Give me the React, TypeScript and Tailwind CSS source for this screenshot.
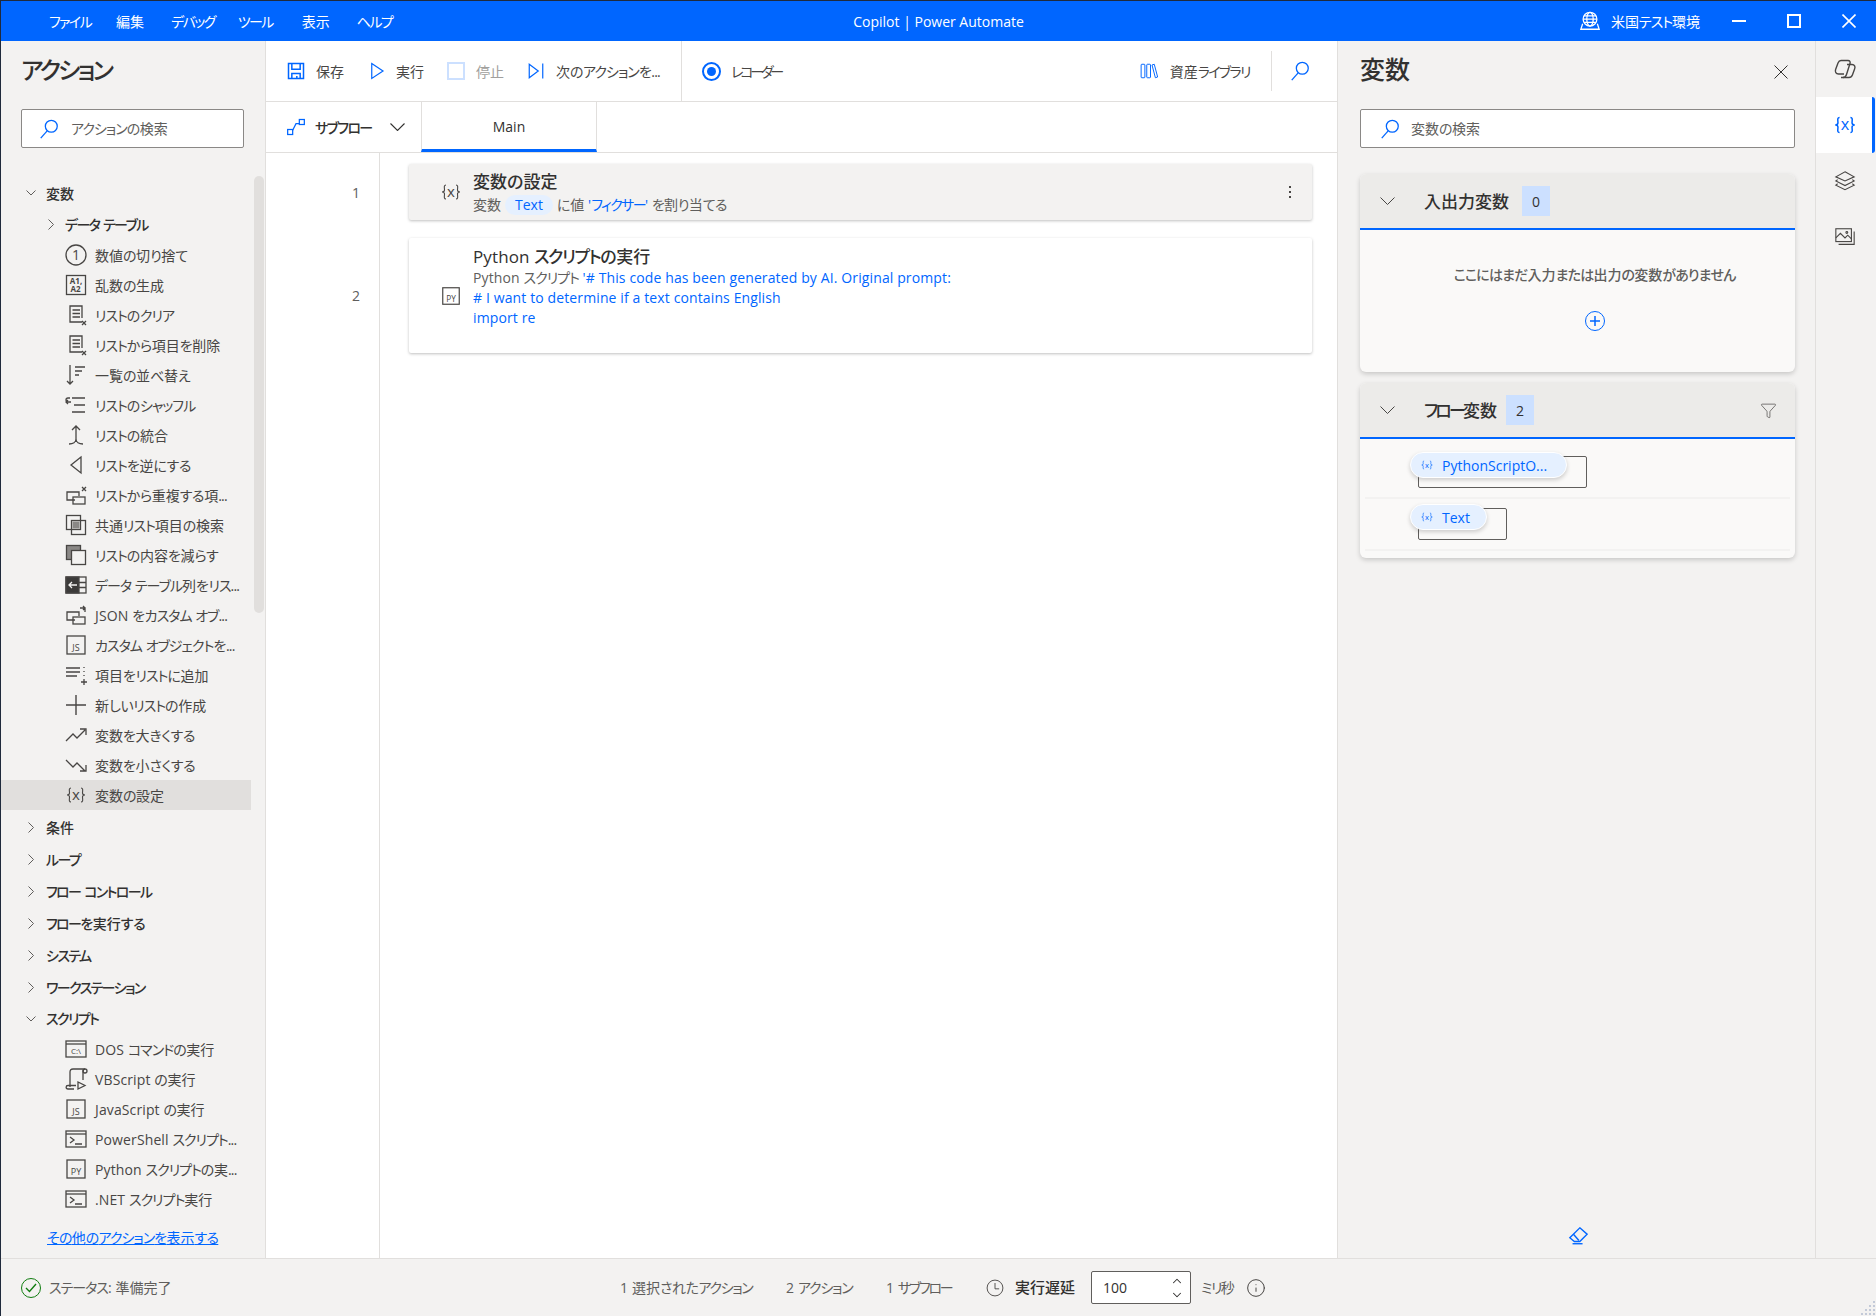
import React from 'react';
import { ChevronDown, ChevronUp, Filter, Info } from 'lucide-react';

const BLUE = '#0066ff';

// the reference font has much narrower kana than Noto, so tighten per script
const TIGHT = 'tracking-[-1.6px]';

const T: React.FC<{ children: string; k?: string; h?: string }> = ({ children, k = 'tracking-[-1px]', h = 'tracking-[-0.4px]' }) => {
  const runs = children.match(/\.\.\.|[ァ-ヶー・]+|[ぁ-ん]+|[\x20-\x2d\x2f-\x7e]+|\.|[^ァ-ヶー・ぁ-ん\x20-\x7e]+/g) ?? [];
  return (
    <span>
      {runs.map((run, i) => {
        if (run === '...') return <span key={i} className="tracking-[-0.8px]">{run}</span>;
        if (/^[ァ-ヶー・]/.test(run)) return <span key={i} className={k}>{run}</span>;
        if (/^[ぁ-ん]/.test(run)) return <span key={i} className={h}>{run}</span>;
        if (/^[\x20-\x7e]/.test(run)) return <span key={i} className="tracking-[0.12px]">{run}</span>;
        return <span key={i}>{run}</span>;
      })}
    </span>
  );
};

const Ic: React.FC<{ size?: number; color?: string; sw?: number; vb?: string; children: React.ReactNode }> = ({
  size = 24,
  color = '#484644',
  sw = 1.2,
  vb = '0 0 24 24',
  children,
}) => (
  <svg width={size} height={size} viewBox={vb} fill="none" stroke={color} strokeWidth={sw} className="shrink-0">
    {children}
  </svg>
);

const Chev: React.FC<{ dir: 'down' | 'right'; w: number; color?: string; sw?: number }> = ({ dir, w, color = '#605e5c', sw = 1 }) => {
  const h = w / 2 + 1;
  return dir === 'down' ? (
    <svg width={w} height={h} viewBox={`0 0 ${w} ${h}`} fill="none" stroke={color} strokeWidth={sw} className="shrink-0">
      <path d={`M0.500 0.500 L${w / 2} ${w / 2} L${w - 0.5} 0.500`} />
    </svg>
  ) : (
    <svg width={h} height={w} viewBox={`0 0 ${h} ${w}`} fill="none" stroke={color} strokeWidth={sw} className="shrink-0">
      <path d={`M0.500 0.500 L${w / 2} ${w / 2} L0.500 ${w - 0.5}`} />
    </svg>
  );
};

const Cross: React.FC<{ w: number; color?: string; sw?: number }> = ({ w, color = 'currentColor', sw = 1 }) => (
  <svg width={w} height={w} viewBox={`0 0 ${w} ${w}`} fill="none" stroke={color} strokeWidth={sw} className="shrink-0">
    <path d={`M0.500 0.500 L${w - 0.5} ${w - 0.5} M${w - 0.5} 0.500 L0.500 ${w - 0.5}`} />
  </svg>
);

const SvgLabel: React.FC<{ x: number; y: number; size: number; children: string; color?: string; weight?: number }> = ({ x, y, size, children, color = '#484644', weight = 400 }) => (
  <text x={x} y={y} fontSize={size} fontWeight={weight} fill={color} stroke="none" textAnchor="middle" fontFamily="'Open Sans', sans-serif">
    {children}
  </text>
);

const SearchIcon: React.FC<{ size?: number }> = ({ size = 22 }) => (
  <Ic size={size} color={BLUE} sw={1.4}>
    <circle cx="14.5" cy="9" r="6.5" />
    <path d="M10 14 L3 22" />
  </Ic>
);

const BracesX: React.FC<{ size?: number; color?: string; fs?: number; sw?: number }> = ({ size = 24, color = '#484644', fs = 15, sw = 1.1 }) => (
  <Ic size={size} color={color} sw={sw}>
    <path d="M7 5 C4.500 5 5.500 8 5.500 10 C5.500 11.500 4.500 12 3 12 C4.500 12 5.500 12.500 5.500 14 C5.500 16 4.500 19 7 19" />
    <path d="M17 5 C19.500 5 18.500 8 18.500 10 C18.500 11.500 19.500 12 21 12 C19.500 12 18.500 12.500 18.500 14 C18.500 16 19.500 19 17 19" />
    <SvgLabel x={12} y={17} size={fs} color={color}>x</SvgLabel>
  </Ic>
);

const PyIcon: React.FC<{ size?: number }> = ({ size = 24 }) => (
  <Ic size={size} sw={1.3}>
    <rect x="3" y="3" width="18" height="18" />
    <SvgLabel x={12} y={18} size={9}>PY</SvgLabel>
  </Ic>
);

const JsIcon = () => (
  <Ic sw={1.3}>
    <rect x="3" y="3" width="18" height="18" />
    <SvgLabel x={12} y={18} size={9}>JS</SvgLabel>
  </Ic>
);

const ListX = () => (
  <Ic sw={1.3}>
    <path d="M18 19 H6 V3 H18 V15" />
    <path d="M8.500 7 H16 M8.500 10.500 H16 M8.500 14 H16" />
    <path d="M18 18 L22 22 M22 18 L18 22" />
  </Ic>
);

const Terminal = () => (
  <Ic sw={1.3}>
    <rect x="2" y="4" width="20" height="16" />
    <path d="M2 7 H22" />
    <path d="M6 10 L10 13 L6 16 M11 17 H18" />
  </Ic>
);

const TwoBoxes: React.FC<{ mark: 'x' | 'arrow' }> = ({ mark }) => (
  <Ic sw={1.3}>
    <path d="M11 17 H3 V9 H15 V13" />
    <rect x="9" y="14" width="12" height="7" />
    {mark === 'x' ? <path d="M18 4 L22 8 M22 4 L18 8" /> : <path d="M16 5 H21 V9 M19 3 L21 5 L19 7" />}
  </Ic>
);

const treeIcons: Record<string, React.ReactNode> = {
  round: (
    <Ic sw={1.3}>
      <circle cx="12" cy="12" r="10" />
      <SvgLabel x={12} y={17} size={14}>1</SvgLabel>
    </Ic>
  ),
  random: (
    <Ic sw={1.3}>
      <rect x="2.500" y="2.500" width="19" height="19" />
      <SvgLabel x={12} y={11} size={8} weight={700}>A1,</SvgLabel>
      <SvgLabel x={11.5} y={19} size={8} weight={700}>A2</SvgLabel>
    </Ic>
  ),
  clear: <ListX />,
  remove: <ListX />,
  sort: (
    <Ic sw={1.3}>
      <path d="M6 2 V21 M3 18 L6 21 L9 18" />
      <path d="M11 4 H21 M11 8 H18 M11 12 H15" />
    </Ic>
  ),
  shuffle: (
    <Ic sw={1.3}>
      <path d="M8 5 H21 M10 12 H21 M8 19 H21" />
      <path d="M7 9 H4 A2 2 0 0 1 4 5 H6 M4 7 L2 9 L4 11" />
    </Ic>
  ),
  merge: (
    <Ic sw={1.3}>
      <path d="M12 3 V16 M8 7 L12 3 L16 7" />
      <path d="M12 16 C12 19 9 21 5 21 M12 16 C12 19 15 21 19 21" />
    </Ic>
  ),
  reverse: (
    <Ic sw={1.3}>
      <path d="M17 4 L7 12 L17 20 Z" />
    </Ic>
  ),
  dedupe: <TwoBoxes mark="x" />,
  common: (
    <Ic sw={1.3}>
      <rect x="2.500" y="2.500" width="14" height="14" />
      <rect x="7.500" y="7.500" width="14" height="14" />
      <rect x="8.500" y="8.500" width="7" height="7" fill="#8a8886" stroke="none" />
    </Ic>
  ),
  subtract: (
    <Ic sw={1.3}>
      <rect x="2.500" y="2.500" width="14" height="14" fill="#8a8886" />
      <rect x="7.500" y="7.500" width="14" height="14" fill="#f3f2f1" />
    </Ic>
  ),
  table: (
    <Ic sw={1.3}>
      <rect x="2" y="4" width="20" height="16" />
      <rect x="2" y="4" width="13" height="16" fill="#3b3a39" />
      <path d="M15 9.500 H22 M15 14.500 H22" />
      <path d="M13 12 H5 M8 9 L5 12 L8 15" stroke="#f3f2f1" />
    </Ic>
  ),
  json: <TwoBoxes mark="arrow" />,
  customjs: <JsIcon />,
  append: (
    <Ic sw={1.3}>
      <path d="M2 5 H16 M2 9 H16 M2 13 H13" />
      <path d="M20 4 V5 M20 8 V9 M20 12 V13" />
      <path d="M17 19 H23 M20 16 V22" />
    </Ic>
  ),
  plus: (
    <Ic sw={1.4}>
      <path d="M2 12 H22 M12 2 V22" />
    </Ic>
  ),
  up: (
    <Ic sw={1.3}>
      <path d="M2 18 L9 11 L13 15 L21 7 M16 6 H22 V12" />
    </Ic>
  ),
  down: (
    <Ic sw={1.3}>
      <path d="M2 7 L9 14 L13 10 L21 18 M22 12 V18 H16" />
    </Ic>
  ),
  setvar: <BracesX />,
  dos: (
    <Ic sw={1.3}>
      <rect x="2" y="4" width="20" height="16" />
      <path d="M2 7 H22" />
      <SvgLabel x={12} y={17} size={8}>{'C:\\'}</SvgLabel>
    </Ic>
  ),
  vbs: (
    <Ic sw={1.3}>
      <path d="M6 20 V5 C6 3 7 2 9 2 H21 C19.500 2 19 3 19 5 V13" />
      <path d="M10 22 H4 C1.500 22 1.500 18.500 4 18.500 H12" />
      <path d="M14 15 V22 L21 18.500 Z" />
      <circle cx="21" cy="4" r="2" />
    </Ic>
  ),
  js: <JsIcon />,
  ps: <Terminal />,
  py: <PyIcon />,
  net: <Terminal />,
};

const variableItems: [string, string][] = [
  ['round', '数値の切り捨て'],
  ['random', '乱数の生成'],
  ['clear', 'リストのクリア'],
  ['remove', 'リストから項目を削除'],
  ['sort', '一覧の並べ替え'],
  ['shuffle', 'リストのシャッフル'],
  ['merge', 'リストの統合'],
  ['reverse', 'リストを逆にする'],
  ['dedupe', 'リストから重複する項...'],
  ['common', '共通リスト項目の検索'],
  ['subtract', 'リストの内容を減らす'],
  ['table', 'データ テーブル列をリス...'],
  ['json', 'JSON をカスタム オブ...'],
  ['customjs', 'カスタム オブジェクトを...'],
  ['append', '項目をリストに追加'],
  ['plus', '新しいリストの作成'],
  ['up', '変数を大きくする'],
  ['down', '変数を小さくする'],
  ['setvar', '変数の設定'],
];

const scriptItems: [string, string][] = [
  ['dos', 'DOS コマンドの実行'],
  ['vbs', 'VBScript の実行'],
  ['js', 'JavaScript の実行'],
  ['ps', 'PowerShell スクリプト...'],
  ['py', 'Python スクリプトの実...'],
  ['net', '.NET スクリプト実行'],
];

const TreeItem: React.FC<{ icon: string; label: string; selected?: boolean }> = ({ icon, label, selected }) => (
  <div className={`flex h-[30px] items-center pl-[63px] text-[14px] whitespace-nowrap text-[#484644] ${selected ? 'bg-[#e1dfdd]' : ''}`}>
    <span className="flex w-[31px] shrink-0">{treeIcons[icon]}</span>
    <T>{label}</T>
  </div>
);

const Category: React.FC<{ label: string; open?: boolean; h?: string }> = ({ label, open, h = 'h-[32px]' }) => (
  <div className={`flex ${h} items-center pl-[22px] text-[14px] font-medium text-[#323130]`}>
    <span className={`flex w-[23px] shrink-0 ${open ? 'pl-[3px]' : 'pl-[5px]'}`}>
      {open ? <Chev dir="down" w={10} /> : <Chev dir="right" w={11} />}
    </span>
    <T k={TIGHT}>{label}</T>
  </div>
);

const ActionsPanel = () => (
  <aside className="flex w-[265px] shrink-0 flex-col border-r border-[#e1dfdd] bg-[#f3f2f1]">
    <div className="flex h-[58px] shrink-0 items-center pl-[20px] text-[24px] font-medium text-[#323130]">
      <T k="tracking-[-2.8px]">アクション</T>
    </div>
    <div className="mt-[10px] ml-[20px] flex h-[39px] w-[223px] shrink-0 items-center rounded-[2px] border border-[#8a8886] bg-white pl-[16px] text-[14px] text-[#605e5c]">
      <span className="flex w-[33px]">
        <SearchIcon />
      </span>
      <T>アクションの検索</T>
    </div>
    <div className="flex min-h-0 flex-1">
      <div className="mt-[29px] w-[250px] shrink-0">
        <Category label="変数" open />
        <div className="flex h-[31px] items-center pl-[41px] text-[14px] font-medium text-[#323130]">
          <span className="flex w-[23px] shrink-0 pl-[6px]">
            <Chev dir="right" w={11} />
          </span>
          <T k={TIGHT}>データ テーブル</T>
        </div>
        {variableItems.map(([icon, label]) => (
          <TreeItem key={label} icon={icon} label={label} selected={icon === 'setvar'} />
        ))}
        <div className="mt-[1px]">
          {['条件', 'ループ', 'フロー コントロール', 'フローを実行する', 'システム', 'ワークステーション'].map((c) => (
            <Category key={c} label={c} />
          ))}
          <Category label="スクリプト" open h="h-[31px]" />
        </div>
        {scriptItems.map(([icon, label]) => (
          <TreeItem key={label} icon={icon} label={label} />
        ))}
        <div className="mt-[14px] pl-[46px] text-[14px] leading-[20px] text-[#0066ff] underline">
          <T h="tracking-[-0.7px]">その他のアクションを表示する</T>
        </div>
      </div>
      <div className="mt-[28px] ml-[3px] h-[437px] w-[10px] rounded-full bg-[#e1dfdd]" />
    </div>
  </aside>
);

const ToolBtn: React.FC<{ icon: React.ReactNode; label: string; disabled?: boolean; w: string }> = ({ icon, label, disabled, w }) => (
  <div className={`flex items-center text-[14px] whitespace-nowrap ${w} ${disabled ? 'text-[#a19f9d]' : 'text-[#484644]'}`}>
    {icon}
    <T>{label}</T>
  </div>
);

const Toolbar = () => (
  <div className="flex h-[61px] shrink-0 items-center border-b border-[#e1dfdd]">
    <div className="flex h-full w-[416px] shrink-0 items-center border-r border-[#e1dfdd] pl-[20px]">
      <ToolBtn
        w="w-[82px]"
        label="保存"
        icon={
          <span className="mr-[10px] flex">
            <Ic size={20} color={BLUE} sw={1.8}>
              <path d="M3 3 H21 V21 H3 Z" />
              <path d="M7 3 V10 H17 V3 M7 21 V15 H17 V21" />
              <path d="M13 21 V18" />
            </Ic>
          </span>
        }
      />
      <ToolBtn
        w="w-[79px]"
        label="実行"
        icon={
          <span className="mr-[10px] flex">
            <Ic size={18} color={BLUE} sw={1.6}>
              <path d="M5 2 L20 12 L5 22 Z" />
            </Ic>
          </span>
        }
      />
      <ToolBtn
        w="w-[80px]"
        label="停止"
        disabled
        icon={<span className="mr-[11px] h-[18px] w-[18px] border-2 border-[#cce0ff]" />}
      />
      <ToolBtn
        w="w-[130px]"
        label="次のアクションを..."
        icon={
          <span className="mr-[11px] flex">
            <Ic size={18} color={BLUE} sw={1.6}>
              <path d="M3 3 L15 12 L3 21 Z M21 2 V22" />
            </Ic>
          </span>
        }
      />
    </div>
    <div className="ml-[20px] flex items-center text-[14px] text-[#484644]">
      <span className="mr-[10px] flex h-[19px] w-[19px] items-center justify-center rounded-full border-2 border-[#0066ff]">
        <span className="h-[9px] w-[9px] rounded-full bg-[#0066ff]" />
      </span>
      <T k="tracking-[-3.2px]">レコーダー</T>
    </div>
    <div className="ml-auto flex items-center text-[14px] text-[#484644]">
      <span className="mr-[12px] flex">
        <Ic size={18} color={BLUE} sw={1.3}>
          <rect x="1.500" y="3" width="5" height="18" rx="1" />
          <rect x="9" y="3" width="5" height="18" rx="1" />
          <path d="M16 4 L19 3 L23.500 20 L20.500 21 Z" />
        </Ic>
      </span>
      <T k={TIGHT}>資産ライブラリ</T>
    </div>
    <div className="ml-[21px] h-[40px] w-px bg-[#e1dfdd]" />
    <div className="flex w-[65px] pl-[17px]">
      <SearchIcon />
    </div>
  </div>
);

const Tabs = () => (
  <div className="flex h-[51px] shrink-0 border-b border-[#e1dfdd]">
    <div className="flex w-[155px] shrink-0 items-center pl-[20px] text-[14px] font-medium text-[#323130]">
      <span className="mr-[9px] flex">
        <Ic size={20} color={BLUE} sw={1.5}>
          <rect x="2" y="15" width="6" height="6" />
          <rect x="16" y="3" width="6" height="6" />
          <path d="M8 16 L12 8 H16" />
        </Ic>
      </span>
      <T k={TIGHT}>サブフロー</T>
      <span className="mr-[16px] ml-auto flex">
        <Chev dir="down" w={15} color="#323130" sw={1.1} />
      </span>
    </div>
    <div className="flex h-[50px] w-[176px] items-center justify-center border-x border-b-[3px] border-[#e1dfdd] border-b-[#0066ff] pt-[2px] text-[14px] font-medium text-[#323130]">
      Main
    </div>
  </div>
);

const Chip: React.FC<{ children: string }> = ({ children }) => (
  <span className="mx-[4px] inline-flex h-[20px] items-center rounded-full bg-[#e5f0ff] px-[10px] text-[#0066ff]">{children}</span>
);

const FlowArea = () => (
  <div className="flex min-h-0 flex-1">
    <div className="flex w-[114px] shrink-0 flex-col items-end border-r border-[#e1dfdd] pt-[11px] pr-[19px] text-[14px] text-[#605e5c]">
      <div className="flex h-[56px] items-center">1</div>
      <div className="mt-[18px] flex h-[115px] items-center">2</div>
    </div>
    <div className="flex-1 pt-[11px] pl-[29px]">
      <div className="flex h-[56px] w-[903px] rounded-[2px] bg-[#f3f2f1] shadow-[0_1px_3px_rgba(0,0,0,0.25)]">
        <div className="flex w-[64px] shrink-0 items-center justify-center pl-[20px]">
          <BracesX />
        </div>
        <div className="flex-1 pt-[6px]">
          <div className="text-[17px] leading-[24px] font-medium text-[#323130]">変数の設定</div>
          <div className="h-[22px] text-[14px] leading-[22px] text-[#605e5c]">
            変数
            <Chip>Text</Chip>
            に値{' '}
            <span className="text-[#0066ff]">
              <T k={TIGHT}>'フィクサー'</T>
            </span>{' '}
            <T h="tracking-[-0.8px]">を割り当てる</T>
          </div>
        </div>
        <div className="flex w-[44px] items-center justify-center">
          <span className="flex flex-col gap-[3px]">
            <span className="h-[2px] w-[2px] bg-[#484644]" />
            <span className="h-[2px] w-[2px] bg-[#484644]" />
            <span className="h-[2px] w-[2px] bg-[#484644]" />
          </span>
        </div>
      </div>
      <div className="mt-[18px] flex h-[115px] w-[903px] rounded-[2px] bg-white shadow-[0_1px_3px_rgba(0,0,0,0.25)]">
        <div className="flex w-[64px] shrink-0 items-center justify-center pl-[20px]">
          <PyIcon size={22} />
        </div>
        <div className="flex-1 pt-[8px]">
          <div className="text-[17px] leading-[22px] font-medium text-[#323130]">
            <T k="tracking-[-1.4px]">Python スクリプトの実行</T>
          </div>
          <div className="text-[14px] leading-[20px] text-[#605e5c]">
            <T>Python スクリプト </T>
            <span className="text-[#0066ff]">
              <T>'# This code has been generated by AI. Original prompt:</T>
            </span>
          </div>
          <div className="text-[14px] leading-[20px] text-[#0066ff]">
            <T># I want to determine if a text contains English</T>
          </div>
          <div className="text-[14px] leading-[20px] text-[#0066ff]">
            <T>import re</T>
          </div>
        </div>
      </div>
    </div>
  </div>
);

const SectionHeader: React.FC<{ title: string; count: number; filter?: boolean; badge: string }> = ({ title, count, filter, badge }) => (
  <div className="flex h-[56px] items-center rounded-t-[6px] border-b-2 border-[#0066ff] bg-[#ecebe9] pl-[20px]">
    <span className="flex w-[44px]">
      <Chev dir="down" w={15} color="#484644" />
    </span>
    <span className="mt-[1px] text-[17px] font-medium text-[#323130]">
      <T k="tracking-[-2.8px]">{title}</T>
    </span>
    <span className={`flex h-[30px] w-[28px] items-center justify-center bg-[#cce0ff] text-[14px] text-[#323130] ${badge}`}>{count}</span>
    {filter && (
      <span className="mr-[18px] ml-auto flex">
        <Filter size={17} strokeWidth={1} color="#484644" />
      </span>
    )}
  </div>
);

const VarRow: React.FC<{ name: string; pill: string; box: string }> = ({ name, pill, box }) => (
  <div className="relative mx-[5px] h-[52px] border-b-2 border-[#f3f2f1] pt-[9px]">
    <div className={`ml-[53px] h-[32px] rounded-[2px] border border-[#605e5c] ${box}`} />
    <div className={`absolute top-[5px] left-[45px] flex h-[26px] items-center rounded-full border border-white bg-[#e5f0ff] pl-[9px] text-[14px] text-[#0066ff] shadow-[0_2px_4px_rgba(0,0,0,0.18)] ${pill}`}>
      <span className="mr-[8px] flex">
        <BracesX size={14} color={BLUE} fs={13} />
      </span>
      {name}
    </div>
  </div>
);

const VariablesPanel = () => (
  <aside className="flex w-[478px] shrink-0 flex-col border-r border-[#e1dfdd] bg-[#f3f2f1] pl-[22px]">
    <div className="flex h-[58px] shrink-0 items-center text-[25px] font-medium text-[#323130]">
      変数
      <span className="mr-[27px] ml-auto flex pt-[4px]">
        <Cross w={14} color="#323130" />
      </span>
    </div>
    <div className="mt-[10px] flex h-[39px] w-[435px] shrink-0 items-center rounded-[2px] border border-[#8a8886] bg-white pl-[18px] text-[14px] text-[#605e5c]">
      <span className="flex w-[32px]">
        <SearchIcon />
      </span>
      <T>変数の検索</T>
    </div>
    <div className="mt-[26px] w-[435px] rounded-[6px] bg-[#faf9f8] shadow-[0_2px_5px_rgba(0,0,0,0.18)]">
      <SectionHeader title="入出力変数" count={0} badge="ml-[13px]" />
      <div className="flex h-[142px] flex-col items-center pt-[34px] pl-[34px]">
        <div className="text-[14px] leading-[22px] font-medium text-[#605e5c]">
          <T h="tracking-[-0.8px]">ここにはまだ入力または出力の変数がありません</T>
        </div>
        <div className="mt-[25px] flex h-[20px] w-[20px] items-center justify-center rounded-full border-[1.5px] border-[#0066ff] text-[#0066ff]">
          <svg width="12" height="12" viewBox="0 0 12 12" stroke={BLUE} strokeWidth="1.5">
            <path d="M6 1 V11 M1 6 H11" />
          </svg>
        </div>
      </div>
    </div>
    <div className="mt-[11px] w-[435px] rounded-[6px] bg-[#faf9f8] pb-[7px] shadow-[0_2px_5px_rgba(0,0,0,0.18)]">
      <SectionHeader title="フロー変数" count={2} filter badge="ml-[9px]" />
      <div className="pt-[8px]">
        <VarRow name="PythonScriptO..." pill="w-[157px]" box="w-[169px]" />
        <VarRow name="Text" pill="w-[77px]" box="w-[89px]" />
      </div>
    </div>
    <div className="mt-auto flex h-[32px] w-[435px] items-start justify-center">
      <svg width="20" height="20" viewBox="0 0 22 20" fill="none" stroke={BLUE} strokeWidth="1.5">
        <path d="M13 1 L21 8 L13 16 H7 L2 12 Z" />
        <path d="M6 8 L12 15" />
        <path d="M5 18.500 H16" />
      </svg>
    </div>
  </aside>
);

const SideRail = () => (
  <div className="flex w-[59px] shrink-0 flex-col bg-[#f3f2f1]">
    <div className="flex h-14 items-center justify-center pr-[2px]">
      <Ic size={24} sw={1.4} color="#484644">
        <path d="M8 3.500 H15 C16.800 3.500 17.500 5 17 6.500 L13.500 17.500 C13 19.200 11.800 20.500 10 20.500 H8" />
        <path d="M8 3.500 C6.500 3.500 5.600 4.500 5 6 L2.600 12.500 C1.800 15 3 17 5.500 17 H11" />
        <path d="M14 7.500 H19 C21.500 7.500 22.600 9.500 21.600 12 L19.400 18 C18.800 19.600 17.600 20.500 16 20.500 H10" />
      </Ic>
    </div>
    <div className="flex h-14 items-center justify-center rounded-r-[3px] border-r-[3px] border-[#0066ff] bg-white pl-[2px]">
      <BracesX size={26} color={BLUE} sw={1.4} />
    </div>
    <div className="flex h-14 items-center justify-center pr-[2px]">
      <Ic size={22} sw={1.2}>
        <path d="M12 2 L22 7.500 L12 12 L2 7.500 Z" />
        <path d="M4 10.500 L2 12 L12 17 L22 12 L20 10.500" />
        <path d="M4 15 L2 16.500 L12 21.500 L22 16.500 L20 15" />
      </Ic>
    </div>
    <div className="flex h-14 items-center justify-center pr-[2px]">
      <Ic size={22} sw={1.2}>
        <rect x="2" y="3" width="17" height="14" />
        <path d="M22 6 V20 H5" />
        <path d="M2 13 L7 8 L12 13 L15 10 L19 14" />
        <circle cx="14" cy="7" r="1" />
      </Ic>
    </div>
  </div>
);

const TitleBar = () => (
  <header className="flex h-[41px] shrink-0 items-center border-t border-[#1f2a3c] bg-[#0066ff] text-[14px] text-white">
    <div className="flex flex-1 gap-[25px] whitespace-nowrap">
      <span className="ml-[48px]">
        <T k={TIGHT}>ファイル</T>
      </span>
      <span>編集</span>
      <span className="ml-[2px]">
        <T k={TIGHT}>デバッグ</T>
      </span>
      <span className="ml-[-2px]">
        <T k={TIGHT}>ツール</T>
      </span>
      <span className="ml-[4px]">表示</span>
      <span className="ml-[2px]">
        <T k={TIGHT}>ヘルプ</T>
      </span>
    </div>
    <div>Copilot | Power Automate</div>
    <div className="flex flex-1 items-center justify-end">
      <Ic size={22} color="#fff" sw={1.4}>
        <circle cx="12" cy="10" r="7.500" />
        <ellipse cx="12" cy="10" rx="3.500" ry="7.500" />
        <path d="M4.500 10 H19.500 M5.500 6.500 H18.500 M5.500 13.500 H18.500" />
        <path d="M4 15 L2 21 H22 L20 15" />
      </Ic>
      <span className="mr-[11px] ml-[10px]">
        <T>米国テスト環境</T>
      </span>
      <span className="flex w-[55px] justify-center">
        <span className="h-[2px] w-[14px] bg-white" />
      </span>
      <span className="flex w-[55px] justify-center">
        <span className="h-[14px] w-[14px] border-2 border-white" />
      </span>
      <span className="flex w-[55px] justify-center">
        <Cross w={14} color="#fff" sw={1.6} />
      </span>
    </div>
  </header>
);

const StatusBar = () => (
  <footer className="relative flex h-[58px] shrink-0 items-center border-t border-[#e1dfdd] bg-[#f3f2f1] text-[14px] text-[#605e5c]">
    <span className="ml-[20px] flex h-[20px] w-[20px] items-center justify-center rounded-full border-[1.5px] border-[#107c10]">
      <svg width="12" height="10" viewBox="0 0 12 10" fill="none" stroke="#107c10" strokeWidth="1.4">
        <path d="M1 5 L4.500 8.500 L11 1" />
      </svg>
    </span>
    <span className="ml-[8px] w-[571px]">
      <T>ステータス: 準備完了</T>
    </span>
    <span className="w-[166px]">
      <T k="tracking-[-1.4px]">1 選択されたアクション</T>
    </span>
    <span className="w-[100px]">
      <T k="tracking-[-1.2px]">2 アクション</T>
    </span>
    <span className="w-[99px]">
      <T k="tracking-[-2.2px]">1 サブフロー</T>
    </span>
    <span className="flex">
      <Ic size={20} sw={1.1}>
        <circle cx="12" cy="12" r="9.500" />
        <path d="M12 6 V13 H17" />
      </Ic>
    </span>
    <span className="ml-[10px] text-[15px] font-medium text-[#323130]">実行遅延</span>
    <div className="ml-[16px] flex h-[33px] w-[100px] items-center justify-between rounded-[2px] border border-[#605e5c] bg-white pr-[6px] pl-[11px] text-[#323130]">
      100
      <span className="flex flex-col">
        <ChevronUp size={14} strokeWidth={1.8} />
        <ChevronDown size={14} strokeWidth={1.8} />
      </span>
    </div>
    <span className="ml-[10px]">
      <T k={TIGHT}>ミリ秒</T>
    </span>
    <span className="ml-[11px] flex">
      <Info size={20} strokeWidth={1.2} color="#484644" />
    </span>
    <div className="absolute right-[1px] bottom-[1px] grid grid-cols-4 gap-[2px]">
      {[0, 0, 0, 1, 0, 0, 1, 1, 0, 1, 1, 1, 1, 1, 1, 1].map((on, i) => (
        <span key={i} className={`h-[2px] w-[2px] ${on ? 'bg-[#c3cad8]' : ''}`} />
      ))}
    </div>
  </footer>
);

const App: React.FC = () => (
  <div className="flex h-[1316px] w-[1876px] flex-col overflow-hidden border-l border-[#1f2a3c] bg-[#f3f2f1] [font-family:'Open_Sans','Noto_Sans_CJK_JP',sans-serif] [font-feature-settings:'palt']">
    <TitleBar />
    <div className="flex min-h-0 flex-1">
      <ActionsPanel />
      <main className="flex w-[1072px] shrink-0 flex-col border-r border-[#e1dfdd] bg-white">
        <Toolbar />
        <Tabs />
        <FlowArea />
      </main>
      <VariablesPanel />
      <SideRail />
    </div>
    <StatusBar />
  </div>
);

export default App;
